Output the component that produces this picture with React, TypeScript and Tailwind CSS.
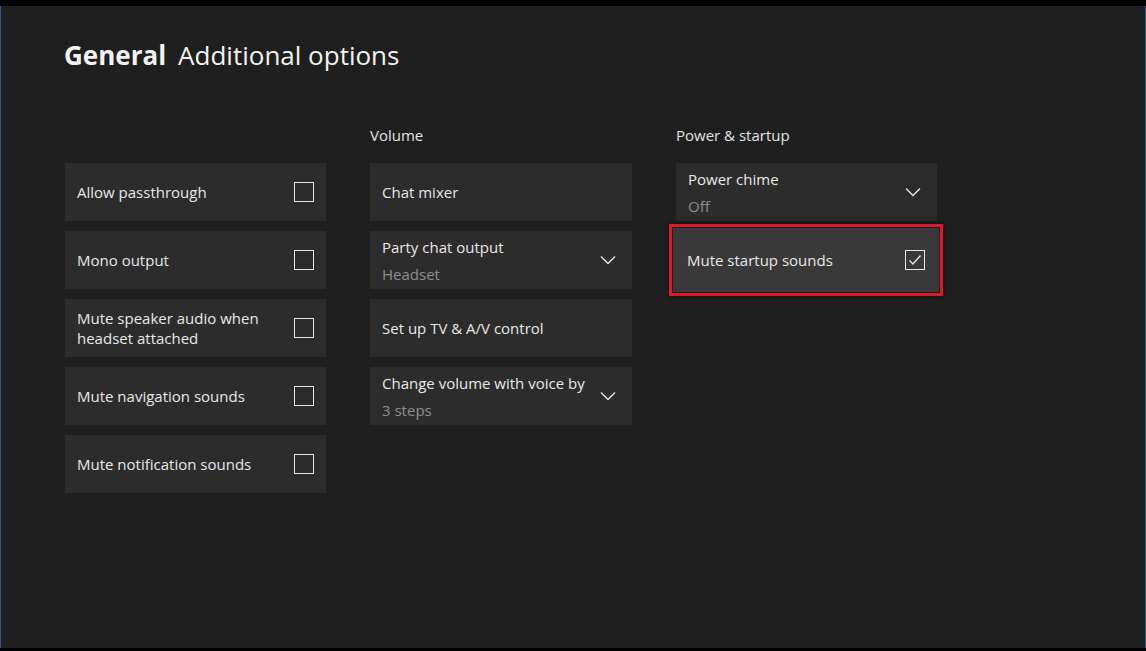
import React from 'react';

type Item = {
  label: string;
  sub?: string;
  kind: 'check' | 'dropdown' | 'plain';
  checked?: boolean;
  focused?: boolean;
};

const Checkbox = ({ checked }: { checked?: boolean }) => (
  <div className="w-[20px] h-[20px] border-[1.5px] border-[#e6e6e6] flex items-center justify-center shrink-0">
    {checked && (
      <svg width="16" height="16" viewBox="0 0 16 16" fill="none">
        <polyline points="2.5,8.5 6,12 13.5,3.5" stroke="#e6e6e6" strokeWidth="1.4" />
      </svg>
    )}
  </div>
);

const Chevron = () => (
  <svg width="16" height="10" viewBox="0 0 16 10" fill="none" className="shrink-0">
    <polyline points="1,1.5 8,8.5 15,1.5" stroke="#e6e6e6" strokeWidth="1.4" />
  </svg>
);

const CardBody = ({ item }: { item: Item }) => (
  <>
    <div className="flex flex-col gap-[7px] min-w-0">
      <span className="text-[15px] leading-[20px] text-[#e8e8e8]">{item.label}</span>
      {item.sub && <span className="text-[15px] leading-[20px] text-[#8e8e8e]">{item.sub}</span>}
    </div>
    {item.kind === 'check' && <Checkbox checked={item.checked} />}
    {item.kind === 'dropdown' && <div className="pr-[4px]"><Chevron /></div>}
  </>
);

const Card = ({ item }: { item: Item }) => {
  if (item.focused) {
    return (
      <div className="h-[58px]">
        <div className="-ml-[7px] -mr-[6px] -mt-[7px] h-[72px] border-[3px] border-[#dc1a2c] p-[1px] shadow-[0_0_6px_rgba(0,0,0,0.6)]">
          <div className="h-full bg-[#393939] flex items-center justify-between pl-[14px] pr-[14px]">
            <CardBody item={item} />
          </div>
        </div>
      </div>
    );
  }
  return (
    <div className="h-[58px] bg-[#2c2c2c] flex items-center justify-between pl-[12px] pr-[12px]">
      <CardBody item={item} />
    </div>
  );
};

const Column = ({ title, items }: { title?: string; items: Item[] }) => (
  <div className="flex flex-col">
    <div className="h-[20px] text-[15px] leading-[20px] text-[#e4e4e4] mb-[18px]">{title}</div>
    <div className="flex flex-col gap-[10px]">
      {items.map((it) => (
        <Card key={it.label} item={it} />
      ))}
    </div>
  </div>
);

const general: Item[] = [
  { label: 'Allow passthrough', kind: 'check' },
  { label: 'Mono output', kind: 'check' },
  { label: 'Mute speaker audio when headset attached', kind: 'check' },
  { label: 'Mute navigation sounds', kind: 'check' },
  { label: 'Mute notification sounds', kind: 'check' },
];

const volume: Item[] = [
  { label: 'Chat mixer', kind: 'plain' },
  { label: 'Party chat output', sub: 'Headset', kind: 'dropdown' },
  { label: 'Set up TV & A/V control', kind: 'plain' },
  { label: 'Change volume with voice by', sub: '3 steps', kind: 'dropdown' },
];

const power: Item[] = [
  { label: 'Power chime', sub: 'Off', kind: 'dropdown' },
  { label: 'Mute startup sounds', kind: 'check', checked: true, focused: true },
];

export default function App() {
  return (
    <div className="w-[1146px] h-[651px] bg-black pt-[6px] pb-[3px] font-['Open_Sans',sans-serif]">
      <div className="h-full bg-[#1f1f1f] border-l border-r border-[#2a5a8c] pl-[63px] pt-[32px]">
        <h1 className="flex items-baseline gap-[12px] text-[26px] leading-[34px] text-[#f2f2f2]">
          <span className="font-bold">General</span>
          <span className="font-normal">Additional options</span>
        </h1>
        <div className="mt-[53px] grid grid-cols-[261px_262px_261px] gap-x-[44px] pl-[1px]">
          <Column items={general} />
          <Column title="Volume" items={volume} />
          <Column title="Power & startup" items={power} />
        </div>
      </div>
    </div>
  );
}
